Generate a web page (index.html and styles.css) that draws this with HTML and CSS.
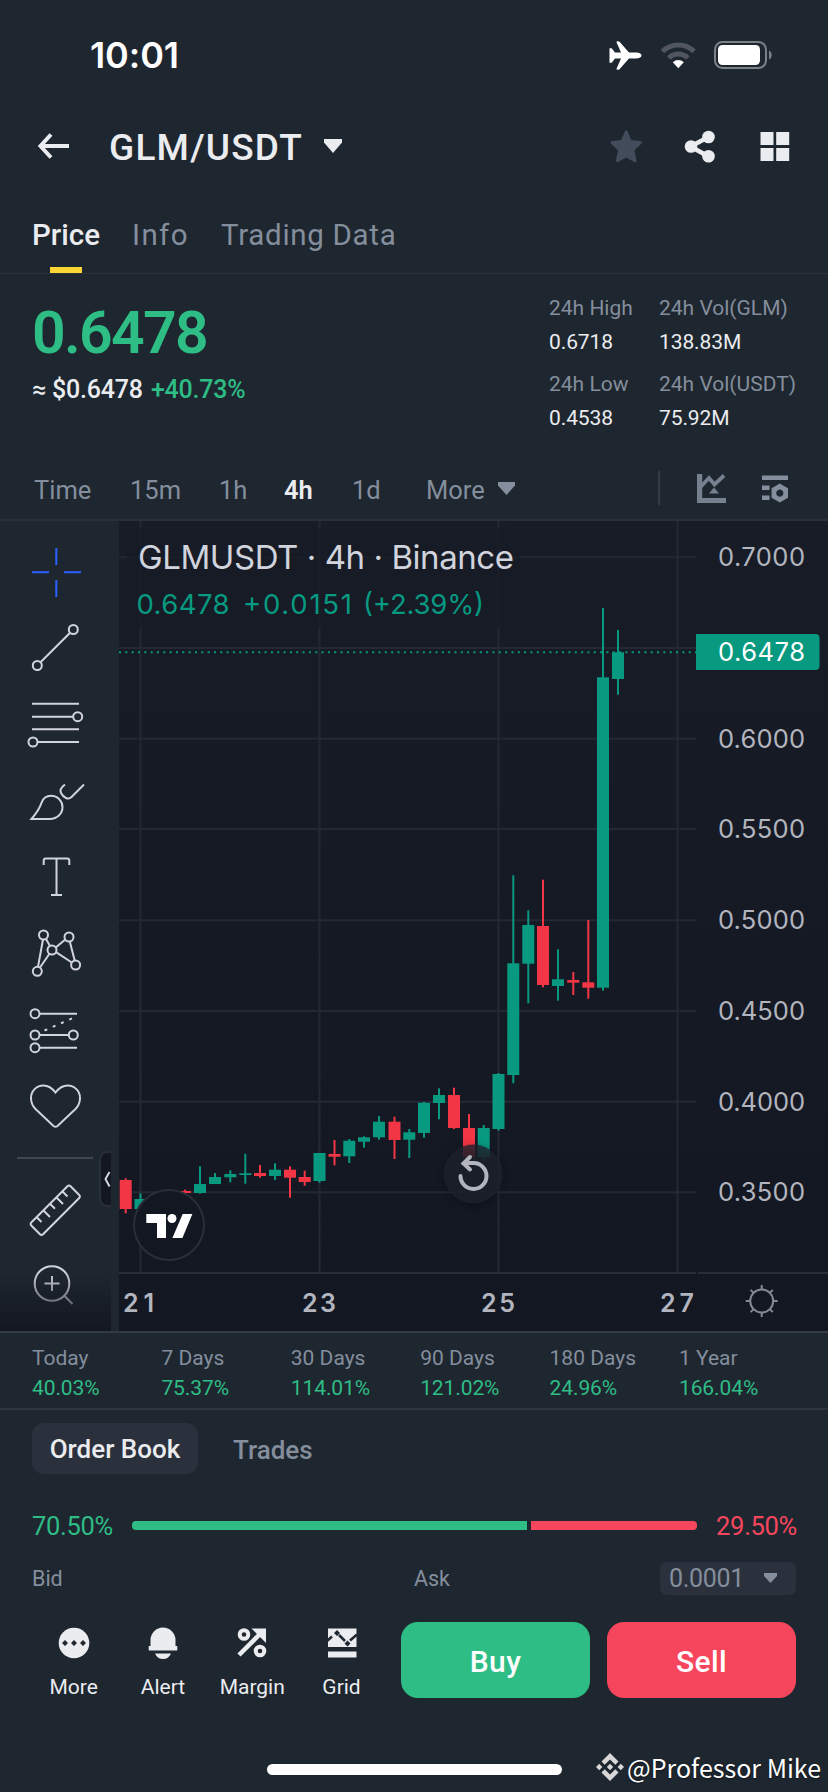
FILE: index.html
```html
<!DOCTYPE html>
<html lang="en">
<head>
    <meta charset="UTF-8">
    <meta name="viewport" content="width=device-width, initial-scale=1.0">
    <title>GLM/USDT</title>
    <link rel="stylesheet" href="styles.css">
</head>
<body>
    <!-- Status bar -->
    <div class="status-bar">
        <span class="clock">10:01</span>
        <svg class="status-icons" width="176" height="40" viewBox="602 35 176 40">
            <path fill="#fff" d="M641.5 55.500c0-1.700-2.500-2.900-5.500-2.900h-7l-9.500-10.800c-.8-.8-3.500-.9-2.900.6l4.400 10.200h-6l-3.300-4.300h-2.200v14.400h2.200l3.300-4.300h6l-4.400 10.200c-.6 1.500 2.100 1.400 2.900.6l9.500-10.800h7c3 0 5.500-1.200 5.500-2.900z"/>
            <g fill="none" stroke="#50555f" stroke-width="5">
                <path d="M662.500 51.500a22.500 22.500 0 0 1 31.600 0"/>
                <path d="M668.800 58a13.500 13.500 0 0 1 19 0"/>
            </g>
            <path fill="#fff" d="M672.800 62.200a8 8 0 0 1 11 0l-5.500 6z"/>
            <rect x="715" y="42" width="51" height="26" rx="7.500" fill="none" stroke="#7c8087" stroke-width="2"/>
            <rect x="718" y="45" width="42" height="20" rx="4.500" fill="#fff"/>
            <path fill="#7c8087" d="M769 50.500c3.600 1.500 3.600 7.500 0 9z"/>
        </svg>
    </div>

    <!-- Pair header -->
    <header class="header">
        <svg class="back" width="33" height="28" viewBox="0 0 33 28"><path fill="none" stroke="#eaecef" stroke-width="4" d="M14 2.500 3.500 14 14 25.500M3.500 14H32"/></svg>
        <h1>GLM/USDT</h1>
        <svg class="caret" width="18" height="14" viewBox="0 0 18 14"><path fill="#eaecef" d="M0 0h18v3.500L9 14 0 3.500z"/></svg>
        <svg class="header-icons" width="182" height="40" viewBox="608 126 182 40">
            <path fill="#434c5a" stroke="#434c5a" stroke-width="3" stroke-linejoin="round" d="M626.200 132l4.100 9.600 10 1-7.500 7.100 2.200 11.100-8.800-5.200-8.800 5.200 2.200-11.100-7.500-7.100 10-1z"/>
            <path fill="none" stroke="#eaecef" stroke-width="4.500" d="M708.500 137l-18 9.500 18 10"/>
            <circle cx="708.500" cy="137" r="6.300" fill="#eaecef"/>
            <circle cx="691" cy="146.500" r="6.300" fill="#eaecef"/>
            <circle cx="708.500" cy="156.300" r="6.300" fill="#eaecef"/>
            <path fill="#eaecef" d="M760.500 132h13v13h-13zM776.200 132h13v13h-13zM760.500 148h13v13h-13zM776.200 148h13v13h-13z"/>
        </svg>
    </header>

    <nav class="tabs">
        <span class="tab active">Price</span>
        <span class="tab">Info</span>
        <span class="tab">Trading Data</span>
    </nav>

    <!-- Price summary -->
    <section class="ticker">
        <div>
            <div class="last-price">0.6478</div>
            <div class="sub-price">≈ $0.6478 <span class="up">+40.73%</span></div>
        </div>
        <div class="stats">
            <div><span>24h High</span><b>0.6718</b></div>
            <div><span>24h Vol(GLM)</span><b>138.83M</b></div>
            <div><span>24h Low</span><b>0.4538</b></div>
            <div><span>24h Vol(USDT)</span><b>75.92M</b></div>
        </div>
    </section>

    <div class="intervals">
        <span class="time">Time</span>
        <span class="m15">15m</span>
        <span class="h1">1h</span>
        <span class="h4 active">4h</span>
        <span class="d1">1d</span>
        <span>More</span>
        <svg class="caret-grey" width="17" height="13" viewBox="0 0 17 13"><path fill="#848e9c" d="M0 0h17v3.500L8.500 13 0 3.500z"/></svg>
        <svg class="interval-icons" width="132" height="38" viewBox="658 470 132 38">
            <path stroke="#333b47" stroke-width="2" d="M659 471v34"/>
            <path fill="#76808f" d="M697 474h5.200v24H726v5h-29z"/>
            <path fill="none" stroke="#76808f" stroke-width="3.800" d="M700 487.500l9-9.500 5.500 6.500 9.500-9"/>
            <path fill="#76808f" d="M709 493.500h10l-5-6z"/>
            <path fill="#848e9c" d="M762 475.500h26v4.500h-26zM762 485.500h7.500v4.500H762zM762 495.500h7.500v4.500H762z"/>
            <path fill="#848e9c" fill-rule="evenodd" d="M779.800 483.500l8.200 4.700v9.600l-8.200 4.700-8.200-4.700v-9.600zm0 6a3.600 3.600 0 1 0 .01 0z"/>
        </svg>
    </div>

    <!-- Chart -->
    <main class="chart">
        <aside class="tools">
            <svg width="111" height="76" viewBox="0 534 111 76"><path class="blue" d="M56.300 548v17M56.300 580v17M32 572.300h17M64 572.300h17"/></svg>
            <svg width="111" height="76" viewBox="0 610 111 76"><path d="M40.500 662.300 70.100 632.700"/><circle cx="73.300" cy="629.500" r="4.500"/><circle cx="37.300" cy="665.500" r="4.500"/></svg>
            <svg width="111" height="76" viewBox="0 686 111 76"><path d="M32 703.700h47M32 716.700h41M32 729.300h47M38 742h41"/><circle cx="77.700" cy="716.700" r="4.500"/><circle cx="33" cy="742" r="4.500"/></svg>
            <svg width="111" height="76" viewBox="0 762 111 76"><path d="M31.500 819c6-7 8.500-11.500 10-16.200 1.700-4.800 5.300-7 9.500-7 6.500 0 11.500 5 11.500 11.500S57 819 50 819zM65 784.500c-3 2.200-5.500 5.500-4 8.500 1 2 4 4.500 5 5 2 .9 4 .5 5.500-1L84 784.500"/></svg>
            <svg width="111" height="76" viewBox="0 838 111 76"><path d="M43.700 865v-4.500q0-2 2-2h21.600q2 0 2 2v4.500M56.500 858.500V895M51 895h11"/></svg>
            <svg width="111" height="76" viewBox="0 914 111 76"><path d="M43 939.500 38 966.800M46 939l4 7M49.500 953.800 40 967.500M55.700 947.500 65.300 939.500M69.800 941.500 74.700 960.500M56 952.200 71.800 962.500"/><circle cx="43.500" cy="935" r="4.500"/><circle cx="69" cy="937" r="4.500"/><circle cx="52" cy="950" r="4.500"/><circle cx="37.300" cy="971.300" r="4.500"/><circle cx="75.600" cy="965" r="4.500"/></svg>
            <svg width="111" height="76" viewBox="0 990 111 76"><path d="M39.500 1013.700H77M39.500 1035h29.500M39.500 1047.700H77"/><path stroke-dasharray="3 6" d="M44.500 1030.500 73 1018"/><circle cx="35" cy="1013.700" r="4.500"/><circle cx="35" cy="1035" r="4.500"/><circle cx="73.300" cy="1035" r="4.500"/><circle cx="35" cy="1047.700" r="4.500"/></svg>
            <svg width="111" height="76" viewBox="0 1066 111 76"><path d="M55.500 1092.500c-3.500-4.500-7-7-12-7-7 0-12.500 5.500-12.500 12.500 0 4.500 1.500 8 4.500 11l18 17q2 1.500 4 0l18-17c3-3 4.500-6.500 4.500-11 0-7-5.500-12.500-12.500-12.500-5 0-8.500 2.500-12 7z"/></svg>
            <hr>
            <svg width="111" height="76" viewBox="0 1172 111 76"><path d="M67.200 1186.500q1.800-1.800 3.600 0l8.200 8.200q1.800 1.800 0 3.600L43.300 1234q-1.800 1.800-3.600 0l-8.200-8.200q-1.800-1.800 0-3.600zM36.500 1217l5 5M43.500 1210.500l6.500 6.500M50 1203.800l5 5M56.500 1197.500l6.500 6.500M62.500 1191.500l5 5"/></svg>
            <svg width="111" height="76" viewBox="0 1248 111 76"><circle cx="52" cy="1283.500" r="17.300"/><path d="M44.500 1283.500h15M52 1276v15M64.500 1296l8 8"/></svg>
            <div class="tools-fade"></div>
            <svg class="collapse" width="13" height="58" viewBox="98 1150 13 58"><path class="collapse-box" d="M112 1152h-4q-8 0-8 9v36q0 9 8 9h4"/><path d="M109.500 1172l-4 7 4 7.500"/></svg>
        </aside>
        <svg class="plot" width="709" height="810" viewBox="119 521 709 810">
            <path class="grid" d="M140.500 521v751M319.500 521v751M498.500 521v751M677.500 521v751M119 557.300h577M119 648h577M119 738.700h577M119 829h577M119 920.300h577M119 1011h577M119 1101.700h577M119 1192.300h577"/>
            <rect class="legend-bg" x="127" y="528" width="393" height="100"/>
            <path class="axis" d="M119 1273h577M698 1273h130"/>
            <path class="last-line" d="M119 652.300h577"/>
            <g id="candles"></g>

            <text class="legend-title" x="138" y="568.500" textLength="376">GLMUSDT · 4h · Binance</text>
            <g class="legend-value">
                <text x="136.500" y="613.500" textLength="93">0.6478</text>
                <text x="243" y="613.500" textLength="109">+0.0151</text>
                <text x="363" y="613.500" textLength="121">(+2.39%)</text>
            </g>

            <g class="price-scale">
                <text x="718" y="565.500" textLength="87">0.7000</text>
                <text x="718" y="747.500" textLength="87">0.6000</text>
                <text x="718" y="838" textLength="87">0.5500</text>
                <text x="718" y="928.500" textLength="87">0.5000</text>
                <text x="718" y="1019.500" textLength="87">0.4500</text>
                <text x="718" y="1110.500" textLength="87">0.4000</text>
                <text x="718" y="1201.300" textLength="87">0.3500</text>
                <path fill="#089981" d="M696 634h119.500q4 0 4 4v28q0 4-4 4H696z"/>
                <text class="last-label" x="718" y="661" textLength="87">0.6478</text>
            </g>

            <g class="time-scale">
                <text x="123" y="1312" textLength="31">21</text>
                <text x="302" y="1312" textLength="34">23</text>
                <text x="481" y="1312" textLength="34">25</text>
                <text x="660" y="1312" textLength="34">27</text>
            </g>

            <!-- TradingView badge -->
            <circle cx="169" cy="1225" r="35" fill="#131722" stroke="#2a2e39" stroke-width="2"/>
            <path fill="#fff" d="M146.300 1214h19.700v24h-9v-15h-10.700zM182.700 1214h9.700l-10 24h-10z"/>
            <circle cx="172" cy="1218.500" r="4.500" fill="#fff"/>

            <!-- Reset chart -->
            <circle class="reset-bg" cx="473.300" cy="1174" r="29.500"/>
            <path fill="none" stroke="#b2b5be" stroke-width="4" stroke-linecap="round" d="M460.500 1176a13 13 0 1 0 13-13h-8M470 1157l-6.500 6.500 6.500 6"/>

            <g fill="none" stroke="#868993" stroke-width="2">
                <circle cx="761.700" cy="1301" r="11.500"/>
                <path d="M761.700 1289.500v-4.500M761.700 1312.500v4.500M750.200 1301h-4.500M773.200 1301h4.500M753.600 1292.900l-3-3M769.800 1292.900l3-3M753.600 1309.100l-3 3M769.800 1309.100l3 3"/>
            </g>
        </svg>
    </main>

    <section class="performance">
        <div><span>Today</span><b>40.03%</b></div>
        <div><span>7 Days</span><b>75.37%</b></div>
        <div><span>30 Days</span><b>114.01%</b></div>
        <div><span>90 Days</span><b>121.02%</b></div>
        <div><span>180 Days</span><b>24.96%</b></div>
        <div><span>1 Year</span><b>166.04%</b></div>
    </section>

    <!-- Order book -->
    <section class="book">
        <div class="book-tabs">
            <span class="pill">Order Book</span>
            <span class="trades">Trades</span>
        </div>
        <div class="ratio">
            <span class="up">70.50%</span>
            <div class="ratio-bar">
                <div class="bid-bar" style="width: 395px"></div>
                <div class="ask-bar"></div>
            </div>
            <span class="down">29.50%</span>
        </div>
        <div class="book-head">
            <span class="bid">Bid</span>
            <span class="ask">Ask</span>
            <div class="step">0.0001
                <svg width="13" height="10" viewBox="0 0 13 10"><path fill="#848e9c" d="M0 0h13v3L6.500 10 0 3z"/></svg>
            </div>
        </div>
    </section>

    <footer class="actions">
        <div class="action">
            <svg width="32" height="34" viewBox="0 0 32 34"><circle cx="16" cy="17" r="15.300" fill="#eaecef"/><path fill="#1e2630" d="M4 17l3-3 3 3-3 3zM13 17l3-3 3 3-3 3zM22 17l3-3 3 3-3 3z"/></svg>
            <span>More</span>
        </div>
        <div class="action">
            <svg width="32" height="34" viewBox="0 0 32 34"><path fill="#eaecef" d="M3.500 20V14a12.500 12.500 0 0 1 25 0v6h1.800v4.500H1.700V20zM8 27.500h16q-2.500 5.500-8 5.500t-8-5.500z"/></svg>
            <span>Alert</span>
        </div>
        <div class="action">
            <svg width="32" height="34" viewBox="0 0 32 34"><path fill="none" stroke="#eaecef" stroke-width="4.500" d="M3 29 25 7"/><path fill="#eaecef" d="M15.500 2.500h14.500V17z"/><g fill="none" stroke="#eaecef" stroke-width="4"><circle cx="8" cy="8.500" r="4.300"/><circle cx="24" cy="25" r="4.300"/></g></svg>
            <span>Margin</span>
        </div>
        <div class="action">
            <svg width="32" height="34" viewBox="0 0 32 34"><path fill="#eaecef" d="M2 2.500h28.500v18.500H2zM2 25.500h28.500v6H2z"/><path fill="none" stroke="#1e2630" stroke-width="2.500" d="M1 15l5-4.500M13 9l6 6M24 14.500l7-6"/><path fill="#1e2630" d="M8 7l3-3 3 3-3 3zM18.500 17.500l3-3 3 3-3 3z"/></svg>
            <span>Grid</span>
        </div>
        <button class="buy">Buy</button>
        <button class="sell">Sell</button>
    </footer>

    <div class="home-bar"></div>

    <div class="watermark">
        <svg width="28" height="28" viewBox="0 0 28 28"><path fill="#d8d8d8" d="M14 0l8.500 8.500-3.200 3.200L14 6.400l-5.300 5.300-3.200-3.200zM14 28l8.500-8.500-3.200-3.200L14 21.600l-5.300-5.300-3.200 3.200zM0 14l3.200-3.200L6.400 14l-3.200 3.200zM21.600 14l3.200-3.200L28 14l-3.200 3.200zM10.800 14l3.200-3.200 3.200 3.200-3.200 3.200z"/></svg>
        <span>@Professor Mike</span>
    </div>

    <script>
        // x, high, body top, body bottom, low, rising
        const candles = [
            [125.7, 1178.3, 1180, 1209, 1213.3, 0],
            [140.5, 1193.3, 1199, 1209, 1209, 1],
            [155.3, 1192, 1196, 1203, 1206, 0],
            [170.2, 1189, 1191, 1200, 1202, 1],
            [185, 1189.7, 1191, 1193, 1195, 0],
            [200, 1166.3, 1184, 1193, 1193.7, 1],
            [215, 1173, 1177, 1184, 1184, 1],
            [230.3, 1170.3, 1174, 1177.3, 1182.3, 1],
            [245.3, 1153.7, 1173.3, 1175, 1183.7, 1],
            [260, 1165, 1173, 1176, 1177.7, 0],
            [275, 1163.3, 1169.7, 1176, 1180, 1],
            [290, 1166.3, 1169.7, 1177.7, 1197.7, 0],
            [304.7, 1170.7, 1177, 1182, 1185.7, 0],
            [319.5, 1153, 1153, 1181, 1182.7, 1],
            [334.5, 1140, 1154, 1156.7, 1165.3, 0],
            [349.3, 1139, 1140.7, 1156.3, 1163, 1],
            [364, 1136.3, 1137.3, 1141.7, 1147.7, 1],
            [379, 1116, 1121.7, 1137.3, 1139.7, 1],
            [394.5, 1116.7, 1121.7, 1140, 1159, 0],
            [409.3, 1129, 1132.3, 1139.7, 1158, 1],
            [424, 1102, 1102.7, 1133, 1137.7, 1],
            [439, 1088.3, 1095, 1103, 1119.3, 1],
            [454, 1087.7, 1095, 1128, 1129, 0],
            [469, 1114, 1128, 1157, 1157, 0],
            [483.7, 1125, 1128, 1157, 1160.7, 1],
            [498.5, 1073, 1074, 1129, 1130.7, 1],
            [513.3, 875.3, 963.3, 1075, 1083.3, 1],
            [528.3, 910.3, 925, 963.7, 1003.3, 1],
            [543, 879.7, 926, 985, 987.3, 0],
            [558, 949.3, 979.3, 986, 1000.7, 1],
            [573.3, 972, 980, 982.7, 995, 0],
            [588.3, 920, 982.3, 987.7, 998.7, 0],
            [603, 608, 677.3, 987.7, 990.7, 1],
            [618, 630, 652.3, 679, 694.7, 1]
        ];

        document.getElementById('candles').innerHTML = candles.map(([x, high, top, bottom, low, rising]) => `
            <g fill="${rising ? '#089981' : '#f23645'}">
                <rect x="${x - 1}" y="${high}" width="2" height="${low - high}"/>
                <rect x="${x - 6}" y="${top}" width="12" height="${bottom - top}"/>
            </g>`).join('');
    </script>
</body>
</html>
```

FILE: styles.css
```css
* {
    box-sizing: border-box;
}

body {
    position: relative;
    width: 828px;
    height: 1792px;
    margin: 0;
    overflow: hidden;
    background: #1e2630;
    font-family: Roboto, sans-serif;
    color: #eaecef;
}

svg {
    display: block;
    flex-shrink: 0;
}

b {
    font-weight: 400;
}

.up {
    color: #2ebd85;
}

.down {
    color: #f6465d;
}

/* Status bar */
.status-bar {
    display: flex;
    justify-content: space-between;
    align-items: center;
    height: 110px;
    padding: 0 50px 0 90px;
}

.clock {
    font-family: Inter, sans-serif;
    font-size: 36px;
    font-weight: 600;
    letter-spacing: -0.1px;
    color: #fff;
}

/* Header */
.header {
    display: flex;
    align-items: center;
    height: 72px;
    padding: 0 38px 0 37px;
}

.header h1 {
    margin: 2px 0 0 39px;
    font-size: 37px;
    font-weight: 500;
    letter-spacing: 1.2px;
}

.caret {
    margin-left: 21px;
}

.header-icons {
    margin-left: auto;
}

.tabs {
    display: flex;
    gap: 32px;
    height: 92px;
    padding-left: 32px;
    border-bottom: 1px solid #2b323d;
}

.tab {
    position: relative;
    padding-top: 15px;
    font-size: 29.500px;
    line-height: 77px;
    letter-spacing: 0.7px;
    color: #848e9c;
}

.tab + .tab:nth-child(2) {
    letter-spacing: 1.4px;
}

.tab.active {
    font-weight: 500;
    letter-spacing: 0;
    color: #eaecef;
}

.tab.active::after {
    content: "";
    position: absolute;
    left: 18px;
    bottom: 0;
    width: 32px;
    height: 6px;
    background: #fcd535;
}

/* Price summary */
.ticker {
    display: flex;
    justify-content: space-between;
    height: 184px;
    padding: 0 32px;
}

.last-price {
    margin-top: 27px;
    font-size: 59px;
    font-weight: 600;
    line-height: 64px;
    letter-spacing: -1.7px;
    color: #2ebd85;
}

.sub-price {
    margin-top: 9px;
    font-size: 25px;
    font-weight: 500;
    line-height: 32px;
    letter-spacing: -0.2px;
}

.sub-price .up {
    margin-left: 2px;
}

.stats {
    display: grid;
    grid-template-columns: 110px 137px;
    align-content: start;
    row-gap: 8px;
    width: 247px;
    padding-top: 17px;
    font-size: 21px;
    line-height: 34px;
}

.stats div {
    display: flex;
    flex-direction: column;
    white-space: nowrap;
}

.stats span {
    color: #848e9c;
}

.stats b {
    letter-spacing: -0.1px;
}

/* Intervals */
.intervals {
    display: flex;
    align-items: center;
    height: 63px;
    padding: 0 38px 0 34px;
    border-bottom: 2px solid #2a303b;
    font-size: 25.500px;
    color: #848e9c;
}

.intervals span {
    padding-top: 2px;
}

.intervals .time { width: 96px; }
.intervals .m15 { width: 89px; }
.intervals .h1 { width: 65px; }
.intervals .h4 { width: 68px; }
.intervals .d1 { width: 74px; }

.intervals .active {
    font-weight: 600;
    color: #eaecef;
}

.caret-grey {
    margin-left: 13px;
}

.interval-icons {
    margin-left: auto;
}

/* Chart */
.chart {
    display: grid;
    grid-template-columns: 119px 709px;
    height: 812px;
    border-bottom: 2px solid #333a46;
}

.tools {
    position: relative;
    padding-top: 13px;
}

.tools svg {
    fill: none;
    stroke: #d1d4dc;
    stroke-width: 2;
}

.tools .blue {
    stroke: #2962ff;
}

.tools hr {
    width: 76px;
    height: 2px;
    margin: 15px 0 13px 17px;
    border: 0;
    background: #434651;
}

.tools-fade {
    position: absolute;
    left: 0;
    bottom: 0;
    width: 111px;
    height: 60px;
    background: linear-gradient(rgba(19, 23, 34, 0), #131722);
}

.tools .collapse {
    position: absolute;
    left: 98px;
    top: 629px;
}

.tools .collapse-box {
    fill: #131722;
    stroke: #2a2e39;
}

.plot {
    background: linear-gradient(#181c27, #131722);
    font-family: Inter, sans-serif;
}

.grid {
    stroke: #242833;
    stroke-width: 2;
}

.axis {
    stroke: #2a2e39;
    stroke-width: 2;
}

.legend-bg {
    fill: #181c27;
    opacity: 0.8;
}

.last-line {
    stroke: #089981;
    stroke-width: 2;
    stroke-dasharray: 2 4.330;
}

.legend-title {
    font-size: 33px;
    fill: #d1d4dc;
}

.legend-value {
    font-size: 27.500px;
    fill: #089981;
}

.price-scale {
    font-size: 25.500px;
    fill: #b2b5be;
}

.price-scale .last-label {
    fill: #fff;
}

.time-scale {
    font-size: 25px;
    font-weight: 600;
    fill: #b2b5be;
}

.reset-bg {
    fill: #1e222d;
    fill-opacity: 0.8;
    filter: drop-shadow(0 2px 4px rgba(0, 0, 0, 0.4));
}

/* Performance */
.performance {
    display: grid;
    grid-template-columns: repeat(6, 129.400px);
    height: 77px;
    padding: 11px 0 0 32px;
    border-bottom: 2px solid #2e3541;
    font-size: 21px;
    line-height: 29.500px;
}

.performance div {
    display: flex;
    flex-direction: column;
}

.performance span {
    color: #848e9c;
}

.performance b {
    color: #2ebd85;
    letter-spacing: -0.1px;
}

/* Order book */
.book {
    padding: 13px 32px 0;
}

.book-tabs {
    display: flex;
    align-items: center;
    height: 51px;
    font-size: 26px;
    font-weight: 500;
}

.pill {
    width: 166px;
    height: 51px;
    border-radius: 12px;
    background: #2b313c;
    line-height: 53px;
    text-align: center;
}

.trades {
    margin-left: 35px;
    padding-top: 2px;
    color: #848e9c;
}

.ratio {
    display: flex;
    justify-content: space-between;
    align-items: center;
    height: 40px;
    margin-top: 31px;
    font-size: 25.500px;
    letter-spacing: -0.3px;
}

.ratio span {
    padding-top: 2px;
}

.ratio .down {
    margin-right: -1px;
}

.ratio-bar {
    display: flex;
    gap: 4px;
    width: 565px;
    height: 9px;
}

.bid-bar {
    border-radius: 4px 0 0 4px;
    background: #2ebd85;
}

.ask-bar {
    flex: 1;
    border-radius: 0 4px 4px 0;
    background: #f6465d;
}

.book-head {
    display: flex;
    align-items: center;
    height: 34px;
    margin-top: 16px;
    font-size: 21.500px;
    color: #848e9c;
}

.bid {
    width: 382px;
}

.step {
    display: flex;
    align-items: center;
    justify-content: space-between;
    width: 136px;
    height: 33px;
    margin-left: auto;
    padding: 0 19px 0 9px;
    border-radius: 7px;
    background: #2b313c;
    font-size: 25px;
    letter-spacing: -0.3px;
}

/* Bottom actions */
.actions {
    display: flex;
    height: 76px;
    margin-top: 27px;
    padding: 0 32px 0 29px;
}

.action {
    display: flex;
    flex-direction: column;
    align-items: center;
    width: 89.300px;
    padding-top: 4px;
    font-size: 21px;
}

.action span {
    margin-top: 15px;
}

.actions button {
    width: 189px;
    height: 76px;
    padding: 2px 0 0;
    border: 0;
    border-radius: 17px;
    color: #fff;
    font-family: inherit;
    font-size: 30px;
    font-weight: 500;
    letter-spacing: 0.4px;
}

.buy {
    margin-left: auto;
    background: #2ebd85;
}

.sell {
    margin-left: 17px;
    background: #f6465d;
}

.home-bar {
    width: 295px;
    height: 11px;
    margin: 66px 0 0 267px;
    border-radius: 6px;
    background: #fff;
}

.watermark {
    position: absolute;
    right: 7px;
    bottom: 9px;
    display: flex;
    align-items: center;
    gap: 3px;
    font-family: "Noto Sans CJK SC", sans-serif;
    font-size: 25px;
    line-height: 32px;
    color: #fff;
    text-shadow: 0 1px 2px rgba(0, 0, 0, 0.5);
}
```
